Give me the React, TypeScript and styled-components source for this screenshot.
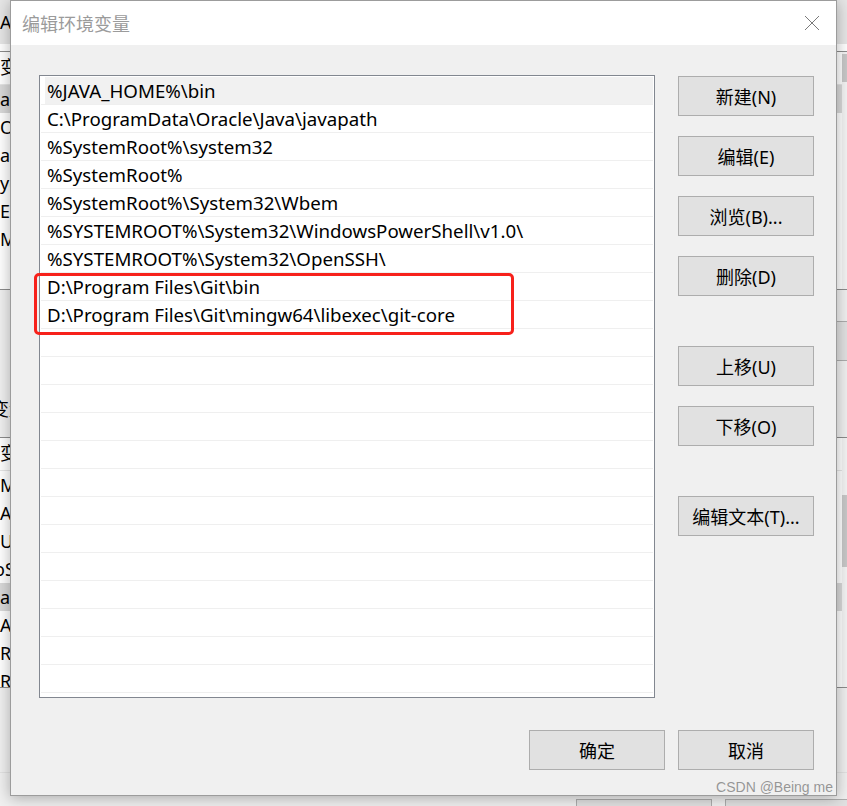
import React from 'react'
import styled, { createGlobalStyle } from 'styled-components'

const GlobalStyle = createGlobalStyle`
  html, body {
    margin: 0;
    padding: 0;
    background: #f0f0f0;
  }
`

const UI_FONT = `"Noto Sans", "Noto Sans CJK SC", sans-serif`

const Screen = styled.div`
  position: relative;
  width: 847px;
  height: 806px;
  overflow: hidden;
  background: #f0f0f0;
  font-family: ${UI_FONT};
  color: #000;
`

/* ---- the window behind the dialog ---- */

const Back = styled.div`
  display: flex;
  flex-direction: column;
  height: 100%;
  font-size: 18px;
  & > * {
    flex-shrink: 0;
  }
`

const BackHeader = styled.div`
  height: 52px;
  box-sizing: border-box;
  padding-top: 8px;
  line-height: 28px;
  background: linear-gradient(#e6e6e6 0 44px, #fff 44px);
  border-bottom: 1px solid #8c8c8c;
`

const BackPanel = styled.div<{ $h: number }>`
  height: ${({ $h }) => $h}px;
  box-sizing: border-box;
  display: flex;
  background: #fff;
  border-bottom: 1px solid #8c8c8c;
  overflow: hidden;
`

const PanelBody = styled.div`
  flex: 1;
  display: flex;
  flex-direction: column;
`

const BackHead = styled.div`
  height: 32px;
  line-height: 30px;
  flex-shrink: 0;
  border-bottom: 1px solid #e5e5e5;
`

const BackRow = styled.div<{ $sel?: boolean; $indent?: number }>`
  height: 28px;
  flex-shrink: 0;
  line-height: 28px;
  white-space: nowrap;
  text-indent: ${({ $indent }) => $indent ?? 0}px;
  background: ${({ $sel }) => ($sel ? '#d9d9d9' : 'transparent')};
`

const ScrollTrack = styled.div`
  width: 5px;
  flex-shrink: 0;
  background: #f4f4f4;
`

const Thumb = styled.div<{ $top: number; $h: number }>`
  margin-top: ${({ $top }) => $top}px;
  height: ${({ $h }) => $h}px;
  background: #c8c8c8;
`

const BackGap = styled.div`
  height: 148px;
  box-sizing: border-box;
  display: flex;
  flex-direction: column;
  padding-top: 31px;
  border-bottom: 1px solid #8c8c8c;
`

const BackButton = styled.div`
  width: 136px;
  height: 40px;
  box-sizing: border-box;
  border: 1px solid #adadad;
  background: #e1e1e1;
`

const GapButton = styled(BackButton)`
  align-self: flex-end;
  margin-right: -125px;
`

const GapLabel = styled.div`
  margin-top: 34px;
  line-height: 28px;
  text-indent: -9px;
  white-space: nowrap;
`

const BackFooter = styled.div`
  flex: 1;
  display: flex;
  flex-direction: column;
`

const FaintLine = styled.div`
  margin-top: 84px;
  height: 1px;
  background: #e2e2e2;
`

const BackButtons = styled.div`
  display: flex;
  justify-content: flex-end;
  gap: 13px;
  margin-top: 26px;
  margin-right: -14px;
`

/* ---- the dialog ---- */

const Dialog = styled.div`
  position: absolute;
  left: 10px;
  top: 0;
  width: 827px;
  height: 796px;
  box-sizing: border-box;
  display: flex;
  flex-direction: column;
  border: 1px solid #9c9c9c;
  box-shadow: 0 2px 14px rgba(0, 0, 0, 0.3);
  background: #f0f0f0;
`

const TitleBar = styled.div`
  height: 44px;
  flex-shrink: 0;
  display: flex;
  align-items: center;
  justify-content: space-between;
  padding: 0 16px 0 11px;
  background: #fff;
`

const Title = styled.div`
  font-family: "Noto Sans CJK SC", sans-serif;
  font-size: 18px;
  color: #9b9b9b;
`

const Body = styled.div`
  flex: 1;
  display: grid;
  grid-template-columns: 616px 136px;
  grid-template-rows: 623px auto;
  column-gap: 23px;
  row-gap: 32px;
  padding: 30px 0 0 28px;
`

const ListBox = styled.div`
  box-sizing: border-box;
  border: 1px solid #828790;
  background: #fff;
  padding: 1px 1px 0 1px;
  overflow: hidden;
`

const Row = styled.div`
  height: 28px;
  box-sizing: border-box;
  display: flex;
  border-bottom: 1px solid #efefef;
`

const Cell = styled.div<{ $selected?: boolean }>`
  flex: 1;
  margin-left: 4px;
  padding-left: 2px;
  font-size: 18.7px;
  line-height: 27px;
  white-space: nowrap;
  background: ${({ $selected }) => ($selected ? '#f1f1f1' : 'transparent')};
`

const SideButtons = styled.div`
  display: flex;
  flex-direction: column;
  padding-top: 1px;
`

const DlgButton = styled.button<{ $gap?: number }>`
  width: 136px;
  height: 40px;
  margin: ${({ $gap }) => $gap ?? 0}px 0 0 0;
  padding: 0;
  box-sizing: border-box;
  border: 1px solid #adadad;
  background: #e1e1e1;
  font-family: ${UI_FONT};
  font-size: 18px;
  color: #000;
`

const Footer = styled.div`
  grid-column: 1 / -1;
  display: flex;
  justify-content: flex-end;
  gap: 13px;
`

const Marker = styled.div`
  position: absolute;
  left: 34px;
  top: 273px;
  width: 480px;
  height: 62px;
  box-sizing: border-box;
  border: 3px solid #f7211b;
  border-radius: 5px;
`

const Watermark = styled.div`
  position: absolute;
  right: 14px;
  top: 779px;
  font-family: "Liberation Sans", sans-serif;
  font-size: 14px;
  color: rgba(110, 110, 110, 0.7);
`

const CloseIcon = () => (
  <svg width="16" height="16" viewBox="0 0 16 16">
    <path d="M1 1 L15 15 M15 1 L1 15" stroke="#7a7a7a" strokeWidth="1" fill="none" />
  </svg>
)

const paths = [
  '%JAVA_HOME%\\bin',
  'C:\\ProgramData\\Oracle\\Java\\javapath',
  '%SystemRoot%\\system32',
  '%SystemRoot%',
  '%SystemRoot%\\System32\\Wbem',
  '%SYSTEMROOT%\\System32\\WindowsPowerShell\\v1.0\\',
  '%SYSTEMROOT%\\System32\\OpenSSH\\',
  'D:\\Program Files\\Git\\bin',
  'D:\\Program Files\\Git\\mingw64\\libexec\\git-core',
]

const rows = [...paths, ...Array(22 - paths.length).fill('')]

const sideButtons = [
  { label: '新建(N)', gap: 0 },
  { label: '编辑(E)', gap: 20 },
  { label: '浏览(B)...', gap: 20 },
  { label: '删除(D)', gap: 20 },
  { label: '上移(U)', gap: 50 },
  { label: '下移(O)', gap: 20 },
  { label: '编辑文本(T)...', gap: 50 },
]

const userVars = [
  { t: 'at', sel: true },
  { t: 'On' },
  { t: 'at' },
  { t: 'yc' },
  { t: 'El' },
  { t: 'M' },
]

const sysVars = [
  { t: 'M' },
  { t: 'AV' },
  { t: 'U' },
  { t: 'oS', indent: -6 },
  { t: 'at', sel: true },
  { t: 'A' },
  { t: 'R' },
  { t: 'R' },
]

const App = () => {
  return (
    <Screen>
      <GlobalStyle />
      <Back>
        <BackHeader>AV</BackHeader>
        <BackPanel $h={238}>
          <PanelBody>
            <BackHead>变量</BackHead>
            {userVars.map((v, i) => (
              <BackRow key={i} $sel={v.sel}>
                {v.t}
              </BackRow>
            ))}
          </PanelBody>
          <ScrollTrack>
            <Thumb $top={2} $h={28} />
          </ScrollTrack>
        </BackPanel>
        <BackGap>
          <GapButton />
          <GapLabel>变量</GapLabel>
        </BackGap>
        <BackPanel $h={250}>
          <PanelBody>
            <BackHead>变量</BackHead>
            {sysVars.map((v, i) => (
              <BackRow key={i} $sel={v.sel} $indent={v.indent}>
                {v.t}
              </BackRow>
            ))}
          </PanelBody>
          <ScrollTrack>
            <Thumb $top={57} $h={72} />
          </ScrollTrack>
        </BackPanel>
        <BackFooter>
          <FaintLine />
          <BackButtons>
            <BackButton />
            <BackButton />
          </BackButtons>
        </BackFooter>
      </Back>

      <Dialog>
        <TitleBar>
          <Title>编辑环境变量</Title>
          <CloseIcon />
        </TitleBar>
        <Body>
          <ListBox>
            {rows.map((p, i) => (
              <Row key={i}>
                <Cell $selected={i === 0}>{p}</Cell>
              </Row>
            ))}
          </ListBox>
          <SideButtons>
            {sideButtons.map((b) => (
              <DlgButton key={b.label} $gap={b.gap}>
                {b.label}
              </DlgButton>
            ))}
          </SideButtons>
          <Footer>
            <DlgButton>确定</DlgButton>
            <DlgButton>取消</DlgButton>
          </Footer>
        </Body>
      </Dialog>

      <Marker />
      <Watermark>CSDN @Being me</Watermark>
    </Screen>
  )
}

export default App
